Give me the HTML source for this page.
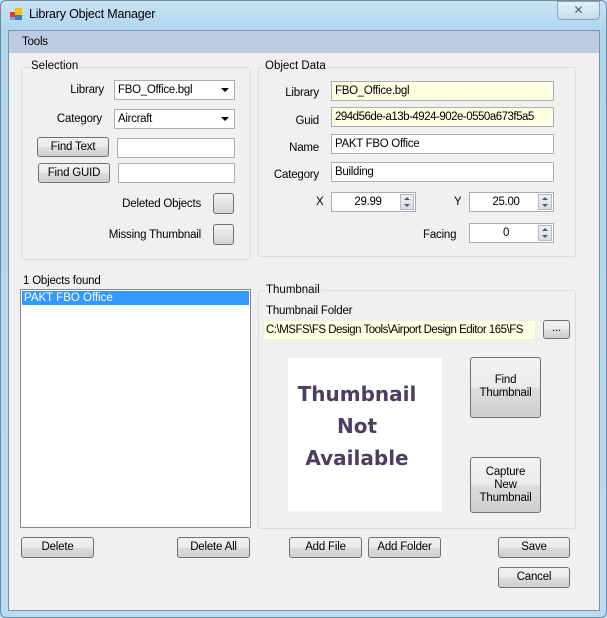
<!DOCTYPE html>
<html><head><meta charset="utf-8"><style>
*{box-sizing:border-box;margin:0;padding:0}
body{width:607px;height:618px;overflow:hidden;background:#c4dff0;font-family:"Liberation Sans",sans-serif;font-size:11.5px;color:#000;position:relative}
.a{position:absolute}
.frame{left:0;top:0;width:607px;height:618px;background:linear-gradient(180deg,#c9e4f4 0,#aed6ee 30px,#b9dcf0 100%);border:1px solid #6d8aa0;border-radius:6px}
.client{left:8px;top:30px;width:592px;height:581px;background:#f0f0f0;border:1px solid #7c93a8}
.menu{left:9px;top:31px;width:590px;height:22px;background:#bccbe0}
.btn{position:absolute;border:1px solid #707070;border-radius:3px;background:linear-gradient(180deg,#f2f2f2 0,#ebebeb 50%,#dddddd 51%,#cfcfcf 100%);text-align:center;font-size:11.5px;line-height:18px;letter-spacing:-0.2px}
.tb{position:absolute;background:#fff;border:1px solid #abadb3;height:20px;padding-left:3px;line-height:18px;white-space:nowrap;overflow:hidden;letter-spacing:-0.3px}
.y{background:#ffffe1}
.grp{position:absolute;border:1px solid #d5dfe5;border-radius:3px}
.gl{position:absolute;background:#f0f0f0;padding:0 1px;line-height:13px}
.lbl{position:absolute;line-height:14px;white-space:nowrap;letter-spacing:-0.2px}
.r{text-align:right}
.arrow{position:absolute;right:5px;top:7px;width:0;height:0;border-left:4px solid transparent;border-right:4px solid transparent;border-top:4px solid #000}
.spin{position:absolute;right:1px;top:1px;width:14px;height:16px;border:1px solid #b5b9c0;background:linear-gradient(#eef1f5,#d8dde5)}
.spin:before{content:"";position:absolute;left:3px;top:2px;border-left:3px solid transparent;border-right:3px solid transparent;border-bottom:3px solid #4a5a70}
.spin:after{content:"";position:absolute;left:3px;top:9px;border-left:3px solid transparent;border-right:3px solid transparent;border-top:3px solid #4a5a70}
.chk{position:absolute;width:21px;height:21px;border:1px solid #707070;border-radius:3px;background:linear-gradient(#f2f2f2,#d4d4d4)}
</style></head><body>
<div class="a frame"></div>
<svg class="a" style="left:10px;top:8px" width="13" height="13"><rect x="0" y="4" width="5" height="5" fill="#e83a1e"/><rect x="5" y="0" width="7" height="7" fill="#f5c400"/><rect x="5" y="7" width="7" height="5" fill="#3a7bd5"/><rect x="0" y="9" width="5" height="3" fill="#7aa7e0"/></svg>
<div class="lbl" style="left:29px;top:7px;font-size:12.5px">Library Object Manager</div>
<div class="a" style="left:557px;top:1px;width:43px;height:19px;border:1px solid #8ba5bc;border-radius:0 0 4px 4px;background:linear-gradient(#e4f1fa,#c2dced);text-align:center;color:#4a5d70;font-size:12px;line-height:17px">✕</div>
<div class="a client"></div>
<div class="a menu"></div>
<div class="lbl" style="left:22px;top:35px">Tools</div>

<div class="grp" style="left:21px;top:67px;width:230px;height:193px"></div>
<div class="gl" style="left:30px;top:60px">Selection</div>
<div class="lbl r" style="left:40px;top:83px;width:64px">Library</div>
<div class="tb" style="left:114px;top:80px;width:121px">FBO_Office.bgl<div class="arrow"></div></div>
<div class="lbl r" style="left:40px;top:112px;width:62px">Category</div>
<div class="tb" style="left:114px;top:109px;width:121px">Aircraft<div class="arrow"></div></div>
<div class="btn" style="left:37px;top:137px;width:72px;height:20px">Find Text</div>
<div class="tb" style="left:117px;top:138px;width:118px"></div>
<div class="btn" style="left:38px;top:163px;width:72px;height:20px">Find GUID</div>
<div class="tb" style="left:118px;top:163px;width:117px"></div>
<div class="lbl r" style="left:100px;top:197px;width:101px">Deleted Objects</div>
<div class="chk" style="left:213px;top:193px"></div>
<div class="lbl r" style="left:100px;top:228px;width:101px">Missing Thumbnail</div>
<div class="chk" style="left:213px;top:224px"></div>

<div class="lbl" style="left:23px;top:274px">1 Objects found</div>
<div class="a" style="left:20px;top:289px;width:231px;height:239px;background:#fff;border:1px solid #828790"></div>
<div class="a" style="left:22px;top:291px;width:227px;height:14px;background:#3399ff;color:#fff;line-height:14px;padding-left:2px">PAKT FBO Office</div>
<div class="btn" style="left:21px;top:537px;width:73px;height:21px">Delete</div>
<div class="btn" style="left:177px;top:537px;width:73px;height:21px">Delete All</div>

<div class="grp" style="left:258px;top:67px;width:318px;height:190px"></div>
<div class="gl" style="left:264px;top:60px">Object Data</div>
<div class="lbl r" style="left:260px;top:86px;width:59px">Library</div>
<div class="tb y" style="left:331px;top:81px;width:223px">FBO_Office.bgl</div>
<div class="lbl r" style="left:260px;top:114px;width:59px">Guid</div>
<div class="tb y" style="left:331px;top:107px;width:223px;letter-spacing:-0.5px">294d56de-a13b-4924-902e-0550a673f5a5</div>
<div class="lbl r" style="left:260px;top:141px;width:59px">Name</div>
<div class="tb" style="left:331px;top:134px;width:223px">PAKT FBO Office</div>
<div class="lbl r" style="left:260px;top:168px;width:59px">Category</div>
<div class="tb" style="left:331px;top:162px;width:223px">Building</div>
<div class="lbl" style="left:316px;top:195px">X</div>
<div class="tb" style="left:331px;top:192px;width:85px;text-align:center;padding-right:14px">29.99<div class="spin"></div></div>
<div class="lbl" style="left:454px;top:195px">Y</div>
<div class="tb" style="left:469px;top:192px;width:85px;text-align:center;padding-right:14px">25.00<div class="spin"></div></div>
<div class="lbl" style="left:423px;top:228px">Facing</div>
<div class="tb" style="left:469px;top:223px;width:85px;text-align:center;padding-right:14px">0<div class="spin"></div></div>

<div class="grp" style="left:258px;top:290px;width:318px;height:239px"></div>
<div class="gl" style="left:265px;top:284px">Thumbnail</div>
<div class="lbl" style="left:266px;top:304px">Thumbnail Folder</div>
<div class="tb y" style="left:263px;top:320px;width:273px;border-color:#f0f0e0;padding-left:2px;letter-spacing:-0.5px">C:\MSFS\FS Design Tools\Airport Design Editor 165\FS</div>
<div class="btn" style="left:543px;top:320px;width:27px;height:19px;line-height:14px">...</div>
<div class="a" style="left:288px;top:358px;width:154px;height:153px;background:#fff"></div>
<div class="a" style="left:288px;top:378px;width:138px;text-align:center;font-family:'DejaVu Sans',sans-serif;font-size:20px;line-height:32px;color:#4a3f60;font-weight:bold;letter-spacing:0px">Thumbnail<br>Not<br>Available</div>
<div class="btn" style="left:470px;top:357px;width:71px;height:61px;line-height:13px;padding-top:16px">Find<br>Thumbnail</div>
<div class="btn" style="left:470px;top:457px;width:71px;height:56px;line-height:13px;padding-top:8px">Capture<br>New<br>Thumbnail</div>
<div class="btn" style="left:289px;top:537px;width:73px;height:21px">Add File</div>
<div class="btn" style="left:368px;top:537px;width:73px;height:21px">Add Folder</div>
<div class="btn" style="left:498px;top:537px;width:72px;height:21px">Save</div>
<div class="btn" style="left:498px;top:567px;width:72px;height:21px">Cancel</div>
</body></html>
